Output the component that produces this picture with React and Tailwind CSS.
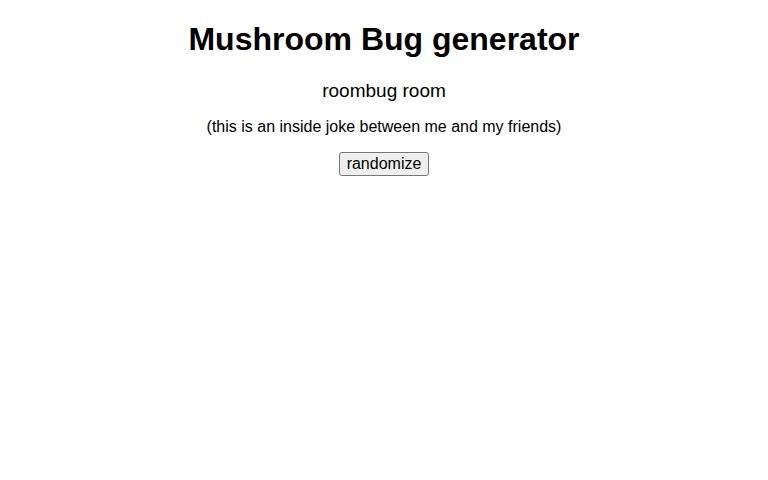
import React, { useState } from 'react';

const names = ['roombug room', 'capbug cave', 'sporebug den', 'gillbug hall'];

const App = () => {
  const [index, setIndex] = useState(0);

  const randomize = () => {
    setIndex(Math.floor(Math.random() * names.length));
  };

  return (
    <div className="min-h-screen bg-white text-black text-center font-['Liberation_Sans',Arial,sans-serif]">
      <h1 className="pt-[21px] text-[32px] leading-[37px] font-bold">
        Mushroom Bug generator
      </h1>

      {/* generated name */}
      <p className="mt-[21.5px] text-[19px] leading-[22px]">{names[index]}</p>

      <p className="mt-4 text-base leading-[18px]">
        (this is an inside joke between me and my friends)
      </p>

      <button
        onClick={randomize}
        className="mt-4 h-6 px-[7px] text-base leading-[18px] bg-[#efefef] border border-[#767676] rounded-[3px]"
      >
        randomize
      </button>
    </div>
  );
};

export default App;
